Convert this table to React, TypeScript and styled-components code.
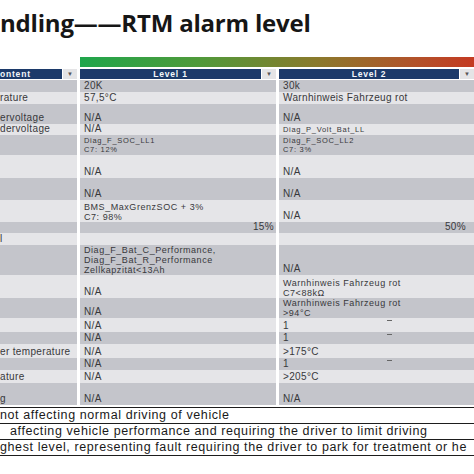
import React from "react";
import styled, { createGlobalStyle } from "styled-components";

const GlobalStyle = createGlobalStyle`
  html, body {
    margin: 0;
    padding: 0;
    background: #ffffff;
  }
  body {
    font-family: "Liberation Sans", Arial, sans-serif;
  }
`;

const Page = styled.div`
  width: 474px;
  height: 474px;
  overflow: hidden;
  background: #fff;
`;

const Title = styled.h1`
  box-sizing: border-box;
  height: 57px;
  margin: 0;
  padding-top: 8px;
  font-family: "Open Sans", Lato, sans-serif;
  font-weight: 700;
  font-size: 24px;
  line-height: 30px;
  letter-spacing: -0.2px;
  color: #161616;
  white-space: nowrap;
`;

const Grid = styled.div<{ $h: number }>`
  display: grid;
  grid-template-columns: 77px 196px 195px;
  column-gap: 3px;
  height: ${(p) => p.$h}px;
`;

const GradientBar = styled.div`
  grid-column: 2 / 4;
  background: linear-gradient(
    to right,
    #1fa64c 0%,
    #4f9a3a 30%,
    #8a7a2c 60%,
    #b2522a 85%,
    #c43a22 100%
  );
`;

const HeaderRow = styled(Grid)`
  margin-top: 2px;
  margin-bottom: 1px;
`;

const HeaderCell = styled.div`
  display: flex;
  gap: 1px;
`;

const HeaderLabel = styled.div<{ $left?: boolean }>`
  flex: 1;
  background: #1c3a6a;
  color: #f4f6fa;
  font-size: 8.5px;
  font-weight: 700;
  letter-spacing: 0.8px;
  line-height: 10px;
  text-align: ${(p) => (p.$left ? "left" : "center")};
  overflow: hidden;
  white-space: nowrap;
`;

const DropButton = styled.div`
  width: 14px;
  background: #e4e4e6;
  color: #555;
  font-size: 6px;
  line-height: 10px;
  text-align: center;
`;

const Row = styled(Grid)<{ $dark: boolean }>`
  & > div {
    background: ${(p) => (p.$dark ? "#c4c5cb" : "#e5e5e8")};
  }
`;

const Cell = styled.div<{ $right?: boolean; $small?: boolean; $multi?: boolean; $pr?: number }>`
  position: relative;
  display: flex;
  flex-direction: column;
  justify-content: flex-end;
  align-items: ${(p) => (p.$right ? "flex-end" : "flex-start")};
  padding: 0 ${(p) => p.$pr ?? 2}px ${(p) => (p.$multi ? 0 : 1)}px 4px;
  overflow: hidden;
  color: #38383b;
  font-size: ${(p) => (p.$small ? 7.5 : p.$multi ? 9 : 10)}px;
  letter-spacing: ${(p) => (p.$small ? 0.7 : p.$multi ? 0.55 : 0.35)}px;
  line-height: ${(p) => (p.$small ? 9 : 10)}px;
  white-space: nowrap;
`;

const LabelCell = styled(Cell)`
  padding-left: 0;
`;

const Mark = styled.span`
  position: absolute;
  left: 108px;
  top: 2px;
  width: 5px;
  height: 1px;
  background: #666;
`;

const Legend = styled.div`
  margin-top: 2px;
  border-bottom: 1.5px solid #1d1d1d;
`;

const LegendLine = styled.div<{ $indent?: number }>`
  height: 15px;
  border-top: 1.5px solid #1d1d1d;
  padding-left: ${(p) => p.$indent ?? 0}px;
  font-size: 12.5px;
  letter-spacing: 0.6px;
  line-height: 15px;
  color: #1a1a1a;
  white-space: nowrap;
`;

type CellData =
  | string
  | { lines: string[]; small?: boolean; right?: boolean; mark?: boolean; pr?: number };

type RowData = { h: number; cells: [CellData, CellData, CellData] };

const rows: RowData[] = [
  { h: 12, cells: ["", "20K", "30k"] },
  { h: 12, cells: ["rature", "57,5°C", "Warnhinweis Fahrzeug rot"] },
  { h: 20, cells: ["ervoltage", "N/A", "N/A"] },
  { h: 11, cells: ["dervoltage", "N/A", { lines: ["Diag_P_Volt_Bat_LL"], small: true }] },
  {
    h: 20,
    cells: [
      "",
      { lines: ["Diag_F_SOC_LL1", "C7: 12%"], small: true },
      { lines: ["Diag_F_SOC_LL2", "C7: 3%"], small: true },
    ],
  },
  { h: 23, cells: ["", "N/A", "N/A"] },
  { h: 22, cells: ["", "N/A", "N/A"] },
  { h: 22, cells: ["", { lines: ["BMS_MaxGrenzSOC + 3%", "C7: 98%"] }, "N/A"] },
  { h: 11, cells: ["", { lines: ["15%"], right: true }, { lines: ["50%"], right: true, pr: 8 }] },
  { h: 12, cells: ["l", "", ""] },
  {
    h: 30,
    cells: [
      "",
      {
        lines: [
          "Diag_F_Bat_C_Performance,",
          "Diag_F_Bat_R_Performance",
          "Zellkapzität<13Ah",
        ],
      },
      "N/A",
    ],
  },
  { h: 23, cells: ["", "N/A", { lines: ["Warnhinweis Fahrzeug rot", "C7<88kΩ"] }] },
  { h: 20, cells: ["", "N/A", { lines: ["Warnhinweis Fahrzeug rot", ">94°C"] }] },
  { h: 14, cells: ["", "N/A", { lines: ["1"], mark: true }] },
  { h: 12, cells: ["", "N/A", { lines: ["1"], mark: true }] },
  { h: 14, cells: ["er temperature", "N/A", ">175°C"] },
  { h: 12, cells: ["", "N/A", { lines: ["1"], mark: true }] },
  { h: 13, cells: ["ature", "N/A", ">205°C"] },
  { h: 22, cells: ["g", "N/A", "N/A"] },
];

const renderCell = (c: CellData, key: number) => {
  const d = typeof c === "string" ? { lines: c ? [c] : [] } : c;
  const Comp = key === 0 ? LabelCell : Cell;
  return (
    <Comp
      key={key}
      $small={d.small}
      $right={d.right}
      $pr={d.pr}
      $multi={!d.small && d.lines.length > 1}
    >
      {d.lines.map((l, i) => (
        <span key={i}>{l}</span>
      ))}
      {d.mark && <Mark />}
    </Comp>
  );
};

const headers = [
  { label: "ontent", left: true },
  { label: "Level 1" },
  { label: "Level 2" },
];

export default function App() {
  return (
    <>
      <GlobalStyle />
      <Page>
        <Title>ndling——RTM alarm level</Title>
        <Grid $h={10}>
          <div />
          <GradientBar />
        </Grid>
        <HeaderRow $h={10}>
          {headers.map((h) => (
            <HeaderCell key={h.label}>
              <HeaderLabel $left={h.left}>{h.label}</HeaderLabel>
              <DropButton>▼</DropButton>
            </HeaderCell>
          ))}
        </HeaderRow>
        {rows.map((r, i) => (
          <Row key={i} $h={r.h} $dark={i % 2 === 0}>
            {r.cells.map((c, j) => renderCell(c, j))}
          </Row>
        ))}
        <Legend>
          <LegendLine>not affecting normal driving of vehicle</LegendLine>
          <LegendLine $indent={10}>
            affecting vehicle performance and requiring the driver to limit driving
          </LegendLine>
          <LegendLine>
            ghest level, representing fault requiring the driver to park for treatment or he
          </LegendLine>
        </Legend>
      </Page>
    </>
  );
}
